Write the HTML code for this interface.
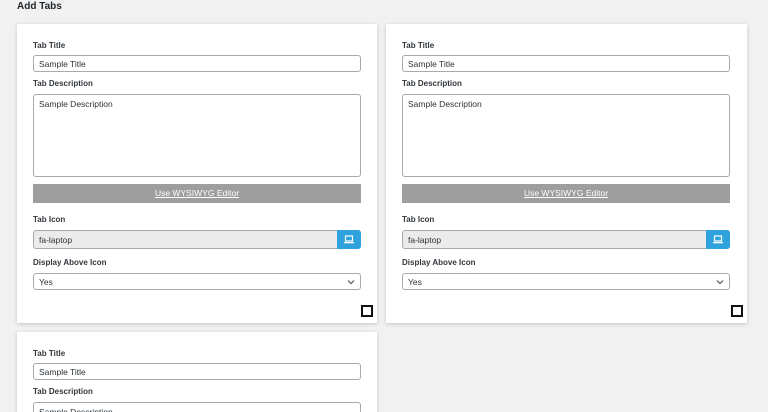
<!DOCTYPE html>
<html><head><style>
*{box-sizing:border-box;margin:0;padding:0}
html,body{width:768px;height:412px;overflow:hidden}
body{background:#f1f1f1;font-family:"Liberation Sans",sans-serif;color:#23282d;position:relative}
h1{position:absolute;left:17px;top:1px;font-size:10px;font-weight:bold;color:#23282d}
.card{position:absolute;width:360px;height:299px;background:#fff;box-shadow:0 1px 4px rgba(0,0,0,.18)}
.card>*{position:absolute;left:16px}
.lbl{font-size:8px;font-weight:bold;color:#32373c}
.in{width:328px;height:17px;border:1px solid #a7aaad;border-radius:3px;font-size:8.5px;padding:3px 5px;color:#2c3338}
.ta{width:328px;height:83px;border:1px solid #a7aaad;border-radius:3px;font-size:8.5px;padding:4px 5px;color:#2c3338}
.btn{width:328px;height:19px;background:#9e9e9e;color:#fff;font-size:8.5px;text-align:center;line-height:19px;text-decoration:underline}
.ic{width:328px;height:19px;border:1px solid #a7aaad;border-radius:3px;background:#ebebeb;font-size:8.5px;padding:4px 5px;color:#2c3338}
.ib{position:absolute;right:-1px;top:-1px;width:24px;height:19px;background:#2ea2dc;border-radius:0 3px 3px 0}
.sel{width:328px;height:17px;border:1px solid #a7aaad;border-radius:3px;font-size:8.5px;padding:3px 5px;color:#2c3338}
.chk{left:auto!important;right:4px;top:281px;width:12px;height:12px;border:2px solid #111}
</style></head><body>
<h1>Add Tabs</h1>
<div class="card" style="left:17px;top:24px">
<div class="lbl" style="top:17px">Tab Title</div>
<div class="in" style="top:31px">Sample Title</div>
<div class="lbl" style="top:55px">Tab Description</div>
<div class="ta" style="top:70px">Sample Description</div>
<div class="btn" style="top:160px">Use WYSIWYG Editor</div>
<div class="lbl" style="top:191px">Tab Icon</div>
<div class="ic" style="top:206px">fa-laptop<div class="ib"><svg width="24" height="19" viewBox="0 0 24 19"><rect x="8.5" y="6" width="7" height="5" fill="none" stroke="#fff" stroke-width="1.2"/><rect x="7" y="12" width="10" height="1.3" fill="#fff"/></svg></div></div>
<div class="lbl" style="top:234px">Display Above Icon</div>
<div class="sel" style="top:249px">Yes<svg style="position:absolute;right:5px;top:5px" width="8" height="6"><path d="M1 1.5L4 4.5L7 1.5" fill="none" stroke="#555" stroke-width="1.2"/></svg></div>
<div class="chk"></div>
</div>
<div class="card" style="left:386px;top:24px;width:361px">
<div class="lbl" style="top:17px">Tab Title</div>
<div class="in" style="top:31px">Sample Title</div>
<div class="lbl" style="top:55px">Tab Description</div>
<div class="ta" style="top:70px">Sample Description</div>
<div class="btn" style="top:160px">Use WYSIWYG Editor</div>
<div class="lbl" style="top:191px">Tab Icon</div>
<div class="ic" style="top:206px">fa-laptop<div class="ib"><svg width="24" height="19" viewBox="0 0 24 19"><rect x="8.5" y="6" width="7" height="5" fill="none" stroke="#fff" stroke-width="1.2"/><rect x="7" y="12" width="10" height="1.3" fill="#fff"/></svg></div></div>
<div class="lbl" style="top:234px">Display Above Icon</div>
<div class="sel" style="top:249px">Yes<svg style="position:absolute;right:5px;top:5px" width="8" height="6"><path d="M1 1.5L4 4.5L7 1.5" fill="none" stroke="#555" stroke-width="1.2"/></svg></div>
<div class="chk"></div>
</div>
<div class="card" style="left:17px;top:332px">
<div class="lbl" style="top:17px">Tab Title</div>
<div class="in" style="top:31px">Sample Title</div>
<div class="lbl" style="top:55px">Tab Description</div>
<div class="ta" style="top:70px">Sample Description</div>
</div>
</body></html>
